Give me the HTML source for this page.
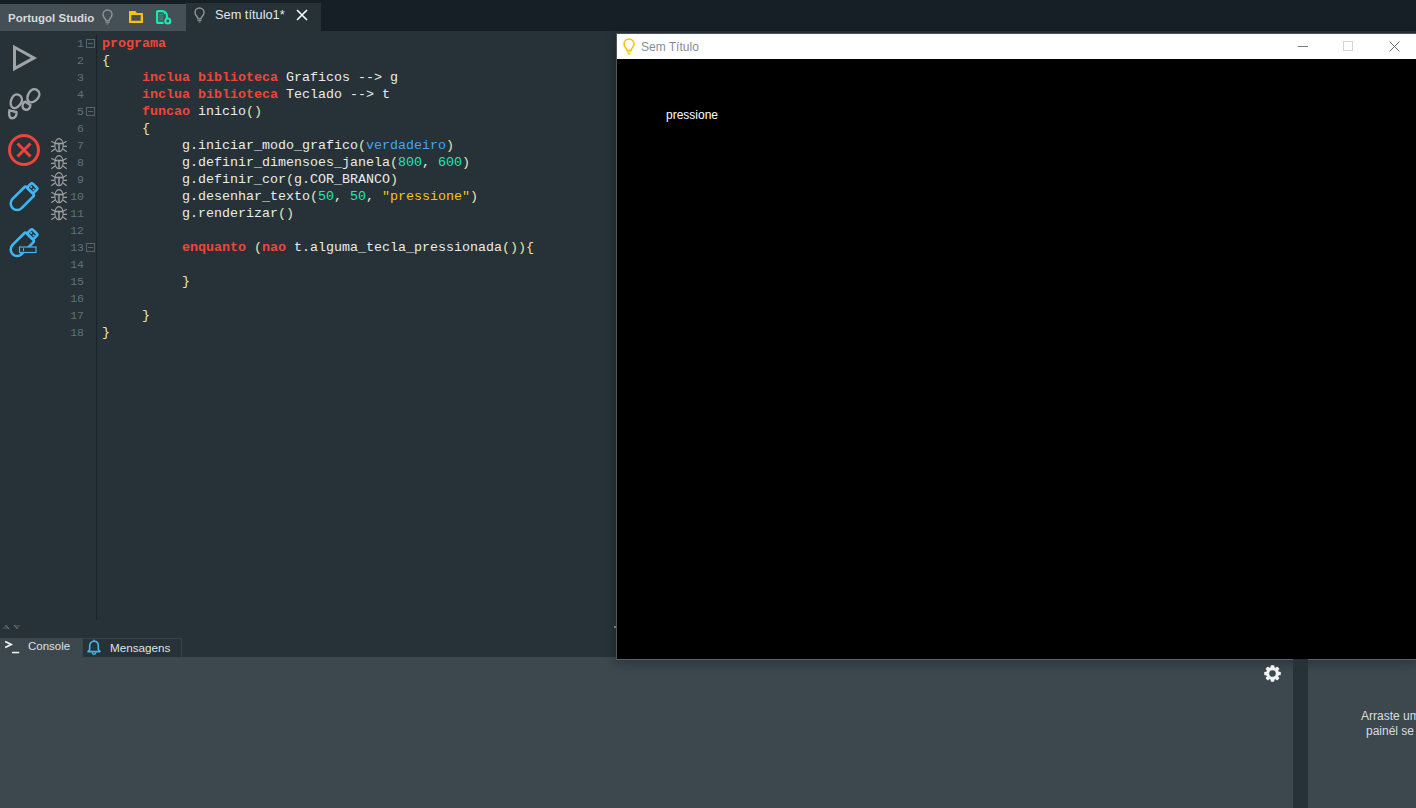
<!DOCTYPE html>
<html><head><meta charset="utf-8">
<style>
*{margin:0;padding:0;box-sizing:border-box}
html,body{width:1416px;height:808px;overflow:hidden;background:#263238;font-family:"Liberation Sans",sans-serif}
.abs{position:absolute}
#topstrip{left:0;top:0;width:1416px;height:31px;background:#161f25}
#apptab{left:0;top:4px;width:186px;height:27px;background:#454f56}
#seltab{left:186px;top:3px;width:135px;height:28px;background:#263238}
#editor{left:0;top:31px;width:1416px;height:606px;background:#263238}
#gutline{left:96px;top:35px;width:1px;height:585px;background:#1b2328}
.ln{position:absolute;left:59px;width:25px;text-align:right;font-family:"Liberation Mono",monospace;font-size:11.5px;color:#5b7380}
.code{position:absolute;left:102px;font-family:"Liberation Mono",monospace;font-size:13.33px;color:#e9ecec;white-space:pre;line-height:17px}
.k{color:#f1453a;font-weight:bold}
.b{color:#efe2b0}
.n{color:#1de9b6}
.v{color:#42a5f5}
.s{color:#ffc107}
#bottabs{left:0;top:637px;width:1416px;height:20px;background:#263238}
#bottom{left:0;top:657px;width:1416px;height:151px;background:#3c474e}
#win{left:616px;top:33px;width:800px;height:627px;background:#000;border-left:1px solid #4f575c;border-bottom:1px solid #5d6368;border-top:1px solid #4a5257;box-shadow:0 3px 10px rgba(0,0,0,0.28)}
#wtitle{left:0;top:0;width:799px;height:25px;background:#fff}

.t{position:absolute;white-space:nowrap;line-height:1}
svg{position:absolute;overflow:visible}
</style></head><body>
<div id="topstrip" class="abs"></div>
<div id="apptab" class="abs"></div>
<div id="seltab" class="abs"></div>
<div id="editor" class="abs"></div>
<div id="gutline" class="abs"></div>
<div id="code" class="code abs" style="top:35px"><span class="k">programa</span>
<span class="b">{</span>
     <span class="k">inclua</span> <span class="k">biblioteca</span> Graficos --&gt; g
     <span class="k">inclua</span> <span class="k">biblioteca</span> Teclado --&gt; t
     <span class="k">funcao</span> inicio<span class="b">()</span>
     <span class="b">{</span>
          g.iniciar_modo_grafico<span class="b">(</span><span class="v">verdadeiro</span><span class="b">)</span>
          g.definir_dimensoes_janela<span class="b">(</span><span class="n">800</span>, <span class="n">600</span><span class="b">)</span>
          g.definir_cor<span class="b">(</span>g.COR_BRANCO<span class="b">)</span>
          g.desenhar_texto<span class="b">(</span><span class="n">50</span>, <span class="n">50</span>, <span class="s">"pressione"</span><span class="b">)</span>
          g.renderizar<span class="b">()</span>

          <span class="k">enquanto</span> <span class="b">(</span><span class="k">nao</span> t.alguma_tecla_pressionada<span class="b">()){</span>

          <span class="b">}</span>

     <span class="b">}</span>
<span class="b">}</span></div>
<div class="ln" style="top:37px">1</div>
<div class="ln" style="top:54px">2</div>
<div class="ln" style="top:71px">3</div>
<div class="ln" style="top:88px">4</div>
<div class="ln" style="top:105px">5</div>
<div class="ln" style="top:122px">6</div>
<div class="ln" style="top:139px">7</div>
<div class="ln" style="top:156px">8</div>
<div class="ln" style="top:173px">9</div>
<div class="ln" style="top:190px">10</div>
<div class="ln" style="top:207px">11</div>
<div class="ln" style="top:224px">12</div>
<div class="ln" style="top:241px">13</div>
<div class="ln" style="top:258px">14</div>
<div class="ln" style="top:275px">15</div>
<div class="ln" style="top:292px">16</div>
<div class="ln" style="top:309px">17</div>
<div class="ln" style="top:326px">18</div>

<div class="t" style="left:8px;top:13px;font-size:11.5px;font-weight:bold;color:#d6dadb">Portugol Studio</div>
<svg style="left:101.5px;top:9px" width="11" height="16" viewBox="0 0 11 16"><path d="M5.5 1C3 1 1 3 1 5.5c0 1.8 1 3 2 4.2.6.7.9 1.4.9 2.1h3.2c0-.7.3-1.4.9-2.1 1-1.2 2-2.4 2-4.2C10 3 8 1 5.5 1z" fill="none" stroke="#8e9294" stroke-width="1.5"/><path d="M3.5 13.5h4M4.5 15h2" stroke="#8c9092" stroke-width="1"/></svg>
<svg style="left:129px;top:11px" width="14" height="12" viewBox="0 0 14 12"><path fill-rule="evenodd" fill="#ffc107" d="M0.6 0H6.4L7.9 1.9H13.4Q14 1.9 14 2.5V11.4Q14 12 13.4 12H0.6Q0 12 0 11.4V0.6Q0 0 0.6 0ZM2.3 4H11.7V9.7H2.3Z"/></svg>
<svg style="left:156px;top:10px" width="16" height="15" viewBox="0 0 16 15"><path d="M7.6 12.9H2.1Q1.1 12.9 1.1 11.9V2.1Q1.1 1.1 2.1 1.1H6.2C8.8 1.1 10.9 3.2 10.9 5.8V8.6" fill="none" stroke="#1de9b6" stroke-width="2.1"/><path d="M3.2 4.3H7.4M3.2 6.1H7.6M3.2 7.9H7.6M3.2 9.7H7" stroke="#1de9b6" stroke-width="1" opacity=".55"/><path d="M7.2 2.2L9.4 2.4L8.6 4.4Z" fill="#1de9b6"/><circle cx="11.8" cy="11" r="2.5" fill="none" stroke="#1de9b6" stroke-width="2.1"/></svg>
<svg style="left:193.5px;top:7px" width="11" height="16" viewBox="0 0 11 16"><path d="M5.5 1C3 1 1 3 1 5.5c0 1.8 1 3 2 4.2.6.7.9 1.4.9 2.1h3.2c0-.7.3-1.4.9-2.1 1-1.2 2-2.4 2-4.2C10 3 8 1 5.5 1z" fill="none" stroke="#8e9294" stroke-width="1.5"/><path d="M3.5 13.5h4M4.5 15h2" stroke="#8c9092" stroke-width="1"/></svg>
<div class="t" style="left:215px;top:9px;font-size:12.8px;color:#e2e7ea">Sem título1*</div>
<svg style="left:296px;top:9px" width="12" height="12" viewBox="0 0 12 12"><path d="M1 1L11 11M11 1L1 11" stroke="#fff" stroke-width="1.6"/></svg>

<svg style="left:0;top:31px" width="50" height="240" viewBox="0 0 50 240">
 <path d="M14.5 16.2L34 26.9L14.5 37.6Z" fill="none" stroke="#a0a4a6" stroke-width="3" stroke-linejoin="miter"/>
 <g fill="none" stroke="#9fa4a7" stroke-width="2.4">
  <path d="M0 -7.2C3.6 -7.2 5.4 -4.2 5.4 -1.2C5.4 3 3 7 0 7C-3 7 -5 3.4 -5 -0.8C-5 -4.2 -3.4 -7.2 0 -7.2Z" transform="translate(15.9 70.4) rotate(24)"/>
  <path d="M9.4 79.4L16.4 81.1C17 84.6 14.8 87.2 12 87.2C9.2 87 8.6 83 9.4 79.4Z"/>
  <path d="M0 -7.2C3.6 -7.2 5.4 -4.2 5.4 -1.2C5.4 3 3 7 0 7C-3 7 -5 3.4 -5 -0.8C-5 -4.2 -3.4 -7.2 0 -7.2Z" transform="translate(33 64.9) rotate(34)"/>
  <path d="M25.6 70.8L30.4 74.4C30 77.5 28 79 25.5 78.8C22.8 78.5 21.8 75 23 72.6C23.6 71.6 24.6 71 25.6 70.8Z"/>
 </g>
 <circle cx="24" cy="119" r="14.5" fill="none" stroke="#f0433a" stroke-width="3"/>
 <path d="M17.5 112.5L30.5 125.5M30.5 112.5L17.5 125.5" stroke="#f0433a" stroke-width="3"/>
</svg>
<svg style="left:4px;top:176px" width="40" height="40" viewBox="0 0 40 40">
 <g transform="translate(18.4 22.2) rotate(45) scale(1.07)" fill="none" stroke="#40b6f3" stroke-width="2.4">
  <path d="M-4.5 -10H4.5Q6 -10 6 -8.5V7A6 6 0 0 1 -6 7V-8.5Q-6 -10 -4.5 -10Z"/>
  <rect x="-4" y="-16.5" width="8" height="6.5" rx="1.6"/>
  <circle cx="-1.6" cy="-13.2" r="1" fill="#40b6f3" stroke="none"/>
  <circle cx="1.6" cy="-13.2" r="1" fill="#40b6f3" stroke="none"/>
 </g>
 
</svg><svg style="left:4px;top:222px" width="40" height="40" viewBox="0 0 40 40">
 <g transform="translate(18.4 22.2) rotate(45) scale(1.07)" fill="none" stroke="#40b6f3" stroke-width="2.4">
  <path d="M-4.5 -10H4.5Q6 -10 6 -8.5V7A6 6 0 0 1 -6 7V-8.5Q-6 -10 -4.5 -10Z"/>
  <rect x="-4" y="-16.5" width="8" height="6.5" rx="1.6"/>
  <circle cx="-1.6" cy="-13.2" r="1" fill="#40b6f3" stroke="none"/>
  <circle cx="1.6" cy="-13.2" r="1" fill="#40b6f3" stroke="none"/>
 </g>
 <rect x="15.5" y="25" width="16.5" height="5.5" fill="#263238" stroke="#40b6f3" stroke-width="1.2"/><path d="M19.5 26.3v3" stroke="#40b6f3" stroke-width="1"/>
</svg><svg style="left:51px;top:138px" width="16" height="15" viewBox="0 0 16 15"><g fill="none" stroke="#9e9e9e" stroke-width="1.1"><ellipse cx="8" cy="7.2" rx="4.2" ry="6.6"/><path d="M3.9 5.5H12.1" stroke-width="1.6"/><path d="M8 5.5v8" stroke-width="1.5"/><path d="M0.3 3.2L4 5.3M15.7 3.2L12 5.3M0 8.4H3.8M16 8.4H12.2M0.3 13.8L4 11M15.7 13.8L12 11"/></g></svg><svg style="left:51px;top:155px" width="16" height="15" viewBox="0 0 16 15"><g fill="none" stroke="#9e9e9e" stroke-width="1.1"><ellipse cx="8" cy="7.2" rx="4.2" ry="6.6"/><path d="M3.9 5.5H12.1" stroke-width="1.6"/><path d="M8 5.5v8" stroke-width="1.5"/><path d="M0.3 3.2L4 5.3M15.7 3.2L12 5.3M0 8.4H3.8M16 8.4H12.2M0.3 13.8L4 11M15.7 13.8L12 11"/></g></svg><svg style="left:51px;top:172px" width="16" height="15" viewBox="0 0 16 15"><g fill="none" stroke="#9e9e9e" stroke-width="1.1"><ellipse cx="8" cy="7.2" rx="4.2" ry="6.6"/><path d="M3.9 5.5H12.1" stroke-width="1.6"/><path d="M8 5.5v8" stroke-width="1.5"/><path d="M0.3 3.2L4 5.3M15.7 3.2L12 5.3M0 8.4H3.8M16 8.4H12.2M0.3 13.8L4 11M15.7 13.8L12 11"/></g></svg><svg style="left:51px;top:189px" width="16" height="15" viewBox="0 0 16 15"><g fill="none" stroke="#9e9e9e" stroke-width="1.1"><ellipse cx="8" cy="7.2" rx="4.2" ry="6.6"/><path d="M3.9 5.5H12.1" stroke-width="1.6"/><path d="M8 5.5v8" stroke-width="1.5"/><path d="M0.3 3.2L4 5.3M15.7 3.2L12 5.3M0 8.4H3.8M16 8.4H12.2M0.3 13.8L4 11M15.7 13.8L12 11"/></g></svg><svg style="left:51px;top:206px" width="16" height="15" viewBox="0 0 16 15"><g fill="none" stroke="#9e9e9e" stroke-width="1.1"><ellipse cx="8" cy="7.2" rx="4.2" ry="6.6"/><path d="M3.9 5.5H12.1" stroke-width="1.6"/><path d="M8 5.5v8" stroke-width="1.5"/><path d="M0.3 3.2L4 5.3M15.7 3.2L12 5.3M0 8.4H3.8M16 8.4H12.2M0.3 13.8L4 11M15.7 13.8L12 11"/></g></svg><svg style="left:86px;top:39px" width="9" height="9" viewBox="0 0 9 9"><rect x=".5" y=".5" width="8" height="8" fill="none" stroke="#56646c"/><path d="M2 4.5h5" stroke="#56646c"/></svg><svg style="left:86px;top:107px" width="9" height="9" viewBox="0 0 9 9"><rect x=".5" y=".5" width="8" height="8" fill="none" stroke="#56646c"/><path d="M2 4.5h5" stroke="#56646c"/></svg><svg style="left:86px;top:243px" width="9" height="9" viewBox="0 0 9 9"><rect x=".5" y=".5" width="8" height="8" fill="none" stroke="#56646c"/><path d="M2 4.5h5" stroke="#56646c"/></svg><div id="bottabs" class="abs"></div>
<div id="bottom" class="abs"></div>
<div id="win" class="abs">
  <div id="wtitle" class="abs"></div>
  <svg style="left:5.5px;top:3.5px" width="12" height="17" viewBox="0 0 12 17"><path d="M6 1C3.2 1 1 3.2 1 6c0 1.9 1 3.1 2.1 4.4.6.7.9 1.4.9 2.1h4c0-.7.3-1.4.9-2.1C10 9.1 11 7.9 11 6 11 3.2 8.8 1 6 1z" fill="none" stroke="#ffc107" stroke-width="1.6"/><path d="M3.8 14h4.4M4.6 15.8h2.8" stroke="#ffc107" stroke-width="1.2"/></svg>
  <div class="t" style="left:24px;top:7px;font-size:12px;color:#838e9a">Sem Título</div>
  <svg style="left:681px;top:12px" width="11" height="1"><rect x="0" y="0" width="10" height="1" fill="#7a7a7a"/></svg>
  <svg style="left:726px;top:7px" width="11" height="11"><rect x=".5" y=".5" width="9" height="9" fill="none" stroke="#d4d4d4"/></svg>
  <svg style="left:772px;top:7px" width="11" height="11" viewBox="0 0 11 11"><path d="M.5 .5L10.5 10.5M10.5 .5L.5 10.5" stroke="#6a6a6a" stroke-width="1"/></svg>
  <div class="t" style="left:49px;top:75px;font-size:12px;color:#fff">pressione</div>
</div>

<div class="abs" style="left:0;top:638px;width:82px;height:19px;background:#3c474e"></div>
<div class="abs" style="left:82px;top:638px;width:100px;height:19px;background:#263238;border:1px solid #37424a;border-bottom:none"></div>
<svg style="left:0;top:634px" width="24" height="24" viewBox="0 0 24 24"><path d="M5.2 7.4L11.2 10.5L5.2 13.6" fill="none" stroke="#f4f4f4" stroke-width="1.7"/><rect x="12" y="17.8" width="7.2" height="1.5" fill="#f4f4f4"/></svg>
<div class="t" style="left:28px;top:641px;font-size:11.5px;color:#dde2e4">Console</div>
<svg style="left:86px;top:639px" width="16" height="17" viewBox="0 0 16 17"><path d="M8 2.2c-2.6 0-4.3 2-4.3 4.6v3.8L2 12.6h12l-1.7-2V6.8C12.3 4.2 10.6 2.2 8 2.2z" fill="none" stroke="#40b6f3" stroke-width="1.6" stroke-linejoin="round"/><path d="M8 .8v1.5" stroke="#40b6f3" stroke-width="1.4"/><path d="M6.3 13.5a1.7 1.7 0 0 0 3.4 0" fill="none" stroke="#40b6f3" stroke-width="1.4"/></svg>
<div class="t" style="left:110px;top:642px;font-size:11.7px;color:#dde2e4">Mensagens</div>
<svg style="left:2px;top:623px" width="20" height="8" viewBox="0 0 20 8"><path d="M0 6L3.6 2L7.2 6z" fill="#44484b"/><path d="M3.6 2L7.2 6" stroke="#8a8a8a" stroke-width=".8"/><path d="M12 2L15.5 6L19 2z" fill="#44484b"/><path d="M12 2L15.5 6" stroke="#8a8a8a" stroke-width=".8"/></svg>
<div class="abs" style="left:614px;top:626px;width:2px;height:2px;background:#737b80"></div>
<div class="abs" style="left:1293px;top:659px;width:15px;height:149px;background:#263238"></div>
<svg style="left:1264px;top:665px" width="17" height="17" viewBox="-8.3 -8.3 16.6 16.6"><g fill="#f2f2f2"><rect x="-1.8" y="-8.1" width="3.6" height="3.4" rx=".9" transform="rotate(0)"/><rect x="-1.8" y="-8.1" width="3.6" height="3.4" rx=".9" transform="rotate(45)"/><rect x="-1.8" y="-8.1" width="3.6" height="3.4" rx=".9" transform="rotate(90)"/><rect x="-1.8" y="-8.1" width="3.6" height="3.4" rx=".9" transform="rotate(135)"/><rect x="-1.8" y="-8.1" width="3.6" height="3.4" rx=".9" transform="rotate(180)"/><rect x="-1.8" y="-8.1" width="3.6" height="3.4" rx=".9" transform="rotate(225)"/><rect x="-1.8" y="-8.1" width="3.6" height="3.4" rx=".9" transform="rotate(270)"/><rect x="-1.8" y="-8.1" width="3.6" height="3.4" rx=".9" transform="rotate(315)"/><circle r="6.3"/></g><circle r="3.2" fill="#3c474e"/></svg>
<div class="t" style="left:1361px;top:710px;font-size:12px;color:#d9dde0">Arraste um</div>
<div class="t" style="left:1366px;top:725px;font-size:12px;color:#d9dde0">painél se</div>
</body></html>
